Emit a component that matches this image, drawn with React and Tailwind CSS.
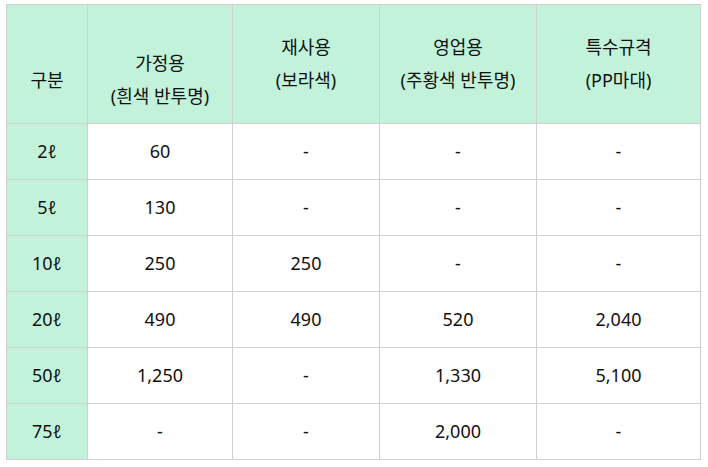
import React from "react";

const rows = [
  ["2ℓ", "60", "-", "-", "-"],
  ["5ℓ", "130", "-", "-", "-"],
  ["10ℓ", "250", "250", "-", "-"],
  ["20ℓ", "490", "490", "520", "2,040"],
  ["50ℓ", "1,250", "-", "1,330", "5,100"],
  ["75ℓ", "-", "-", "2,000", "-"],
];

export default function App() {
  const font = { fontFamily: '"Noto Sans", "Noto Sans CJK KR", sans-serif' };
  return (
    <div className="w-[708px] h-[467px] bg-white pt-[4px] pl-[6px]" style={font}>
      <table className="table-fixed border-collapse w-[694px] text-[18px] text-[#111] leading-[33px]">
        <colgroup>
          <col className="w-[81px]" />
          <col className="w-[145px]" />
          <col className="w-[147px]" />
          <col className="w-[157px]" />
          <col className="w-[164px]" />
        </colgroup>
        <thead>
          <tr className="h-[119px] bg-[#c2f2da]">
            <th className="border border-[#cfcfcf] align-top pt-[59px] font-normal">구분</th>
            <th className="border border-[#cfcfcf] align-top pt-[42px] font-normal">
              <div>가정용</div>
              <div>(흰색 반투명)</div>
            </th>
            <th className="border border-[#cfcfcf] align-top pt-[26px] font-normal">
              <div>재사용</div>
              <div>(보라색)</div>
            </th>
            <th className="border border-[#cfcfcf] align-top pt-[26px] font-normal">
              <div>영업용</div>
              <div>(주황색 반투명)</div>
            </th>
            <th className="border border-[#cfcfcf] align-top pt-[26px] font-normal">
              <div>특수규격</div>
              <div>(PP마대)</div>
            </th>
          </tr>
        </thead>
        <tbody>
          {rows.map((r, i) => (
            <tr key={i} className="h-[56px]">
              {r.map((c, j) => (
                <td
                  key={j}
                  className={
                    "border border-[#cfcfcf] text-center align-middle p-0 " +
                    (j === 0 ? "bg-[#c2f2da]" : "bg-white")
                  }
                >
                  {c}
                </td>
              ))}
            </tr>
          ))}
        </tbody>
      </table>
    </div>
  );
}
